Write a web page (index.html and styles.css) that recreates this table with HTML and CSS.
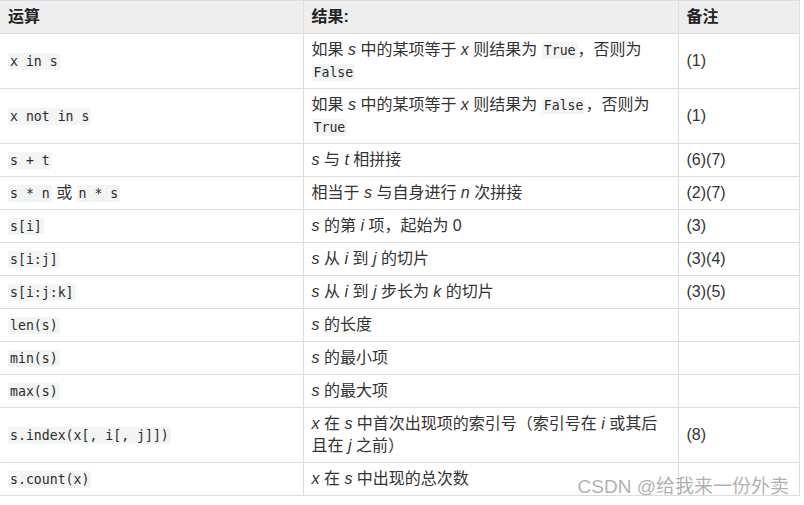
FILE: index.html
```html
<!DOCTYPE html>
<html lang="zh">
<head>
<meta charset="utf-8">
<title>序列操作</title>
<link rel="stylesheet" href="styles.css">
</head>
<body>
<div class="wrap">
<table class="ops">
<colgroup><col class="c1"><col class="c2"><col class="c3"></colgroup>
<thead>
<tr><th>运算</th><th>结果:</th><th>备注</th></tr>
</thead>
<tbody>
<tr><td><code>x in s</code></td><td>如果 <em>s</em> 中的某项等于 <em>x</em> 则结果为 <code>True</code>，否则为 <code>False</code></td><td>(1)</td></tr>
<tr><td><code>x not in s</code></td><td>如果 <em>s</em> 中的某项等于 <em>x</em> 则结果为 <code>False</code>，否则为 <code>True</code></td><td>(1)</td></tr>
<tr><td><code>s + t</code></td><td><em>s</em> 与 <em>t</em> 相拼接</td><td>(6)(7)</td></tr>
<tr><td><code>s * n</code> 或 <code>n * s</code></td><td>相当于 <em>s</em> 与自身进行 <em>n</em> 次拼接</td><td>(2)(7)</td></tr>
<tr><td><code>s[i]</code></td><td><em>s</em> 的第 <em>i</em> 项，起始为 0</td><td>(3)</td></tr>
<tr><td><code>s[i:j]</code></td><td><em>s</em> 从 <em>i</em> 到 <em>j</em> 的切片</td><td>(3)(4)</td></tr>
<tr><td><code>s[i:j:k]</code></td><td><em>s</em> 从 <em>i</em> 到 <em>j</em> 步长为 <em>k</em> 的切片</td><td>(3)(5)</td></tr>
<tr><td><code>len(s)</code></td><td><em>s</em> 的长度</td><td></td></tr>
<tr><td><code>min(s)</code></td><td><em>s</em> 的最小项</td><td></td></tr>
<tr><td><code>max(s)</code></td><td><em>s</em> 的最大项</td><td></td></tr>
<tr><td><code>s.index(x[, i[, j]])</code></td><td><em>x</em> 在 <em>s</em> 中首次出现项的索引号（索引号在 <em>i</em> 或其后且在 <em>j</em> 之前）</td><td>(8)</td></tr>
<tr><td><code>s.count(x)</code></td><td><em>x</em> 在 <em>s</em> 中出现的总次数</td><td></td></tr>
</tbody>
</table>
<div class="watermark">CSDN @给我来一份外卖</div>
</div>
</body>
</html>
```

FILE: styles.css
```css
html, body {
  margin: 0;
  padding: 0;
  background: #ffffff;
}

.wrap {
  position: relative;
  width: 804px;
  height: 505px;
  overflow: hidden;
}

.ops {
  border-collapse: collapse;
  table-layout: fixed;
  width: 799px;
  font-family: "Liberation Sans", "Noto Sans CJK SC", sans-serif;
  font-size: 16px;
  line-height: 22px;
  color: #333333;
}

.c1 { width: 303px; }
.c2 { width: 375px; }
.c3 { width: 121px; }

.ops th,
.ops td {
  border: 1px solid #dddddd;
  padding: 5px 8px;
  text-align: left;
  vertical-align: middle;
}

.ops th:first-child,
.ops td:first-child {
  border-left: none;
}

.ops th {
  background: #eeeeee;
  font-weight: bold;
  color: #222222;
}

.ops em {
  font-style: italic;
}

.ops code {
  font-family: "DejaVu Sans Mono", "Liberation Mono", monospace;
  font-size: 13.2px;
  line-height: 16px;
  background: #f3f4f4;
  border-radius: 2px;
  padding: 1px 2px;
  color: #2b2b2b;
}

.watermark {
  position: absolute;
  right: 15px;
  bottom: 7px;
  font-family: "Liberation Sans", "Noto Sans CJK SC", sans-serif;
  font-size: 19px;
  line-height: 22px;
  color: rgba(150, 150, 150, 0.75);
  white-space: nowrap;
}
```
